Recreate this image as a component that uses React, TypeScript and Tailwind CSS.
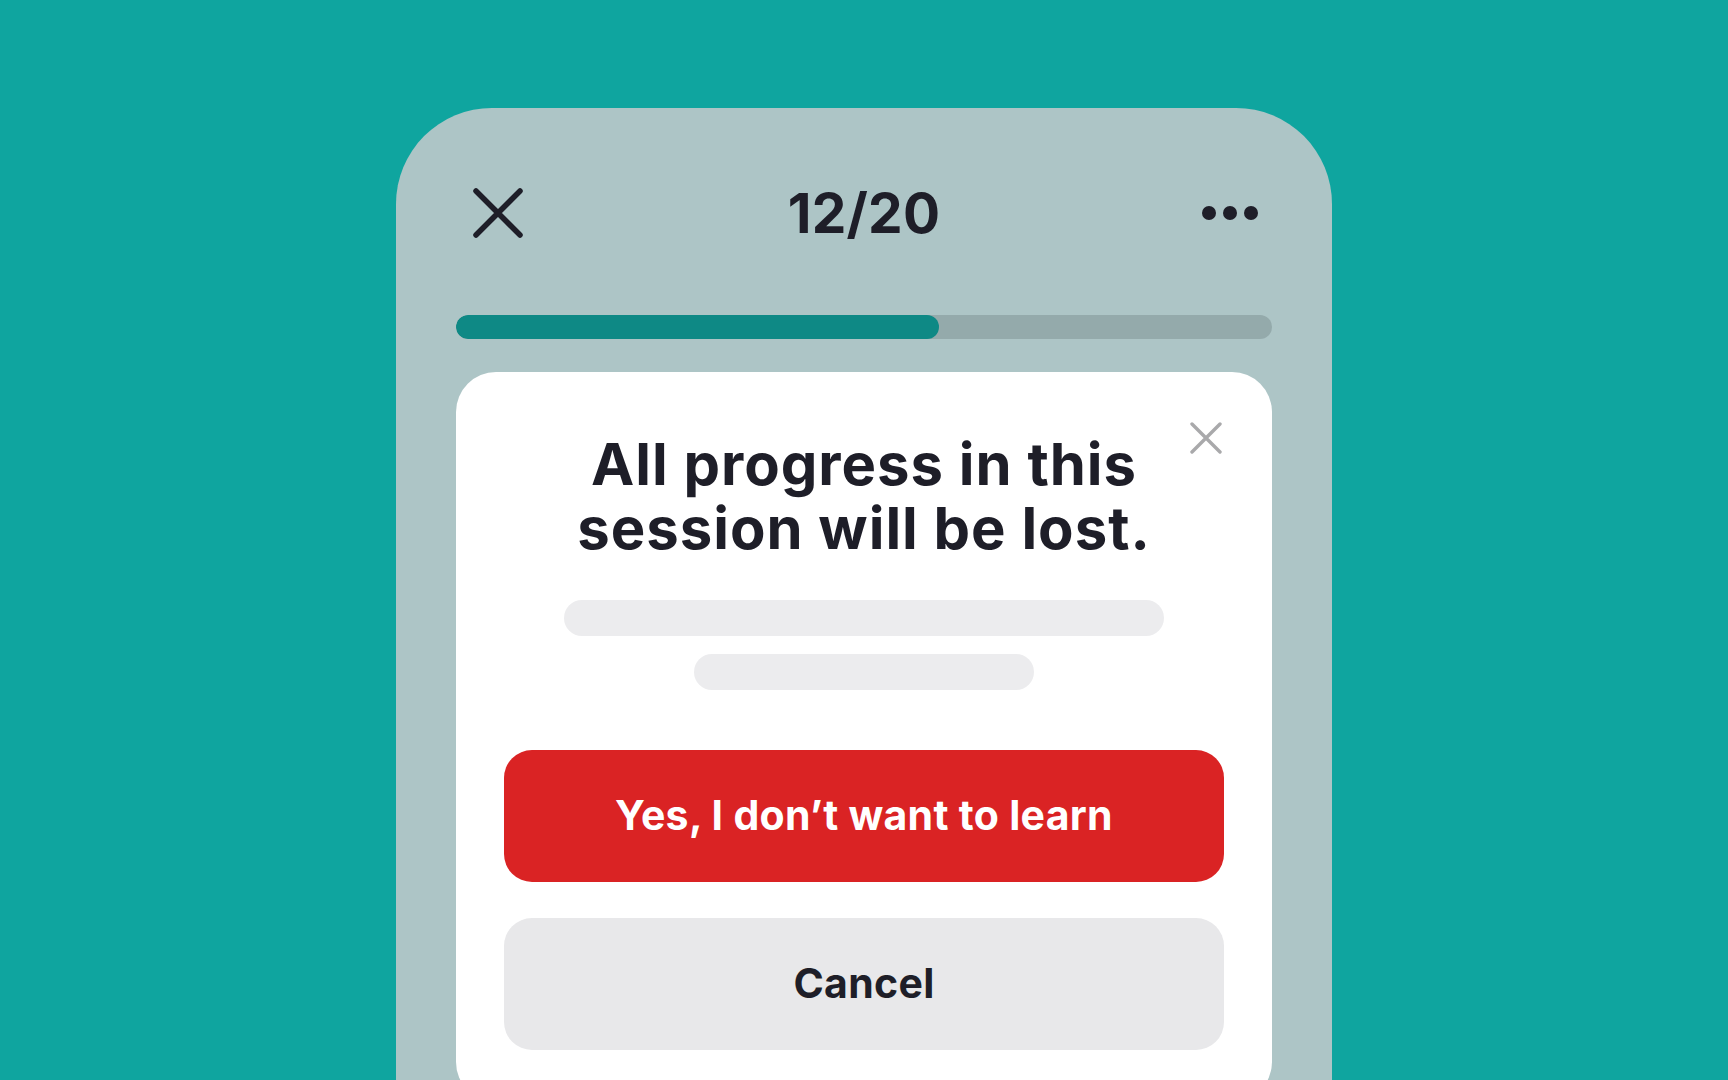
import React from "react";

const font = { fontFamily: "Inter, 'Noto Sans', sans-serif" };

function CloseIcon() {
  return (
    <svg width="50" height="50" viewBox="0 0 50 50" fill="none">
      <path d="M3 3L47 47M47 3L3 47" stroke="#1e1e28" strokeWidth="5.5" strokeLinecap="round" />
    </svg>
  );
}

function MoreIcon() {
  return (
    <svg width="56" height="14" viewBox="0 0 56 14" fill="#1e1e28">
      <circle cx="7" cy="7" r="7" />
      <circle cx="28" cy="7" r="7" />
      <circle cx="49" cy="7" r="7" />
    </svg>
  );
}

function SmallClose() {
  return (
    <svg width="32" height="32" viewBox="0 0 32 32" fill="none">
      <path d="M2 2L30 30M30 2L2 30" stroke="#a9a9ab" strokeWidth="3.4" strokeLinecap="round" />
    </svg>
  );
}

export default function App() {
  const done = 12;
  const total = 20;
  return (
    <div className="w-full h-[1080px] bg-[#0fa59f] overflow-hidden flex justify-center items-start pt-[108px]" style={font}>
      <div className="w-[936px] bg-[#adc5c6] rounded-t-[96px] px-[60px] flex flex-col">
        {/* top bar */}
        <div className="shrink-0 mt-[56px] h-[98px] grid grid-cols-[1fr_auto_1fr] items-center">
          <div className="flex justify-start pl-[17px]">
            <CloseIcon />
          </div>
          <div className="text-[55px] font-bold text-[#1e1e28] leading-none tracking-[0.2px]">
            {done}/{total}
          </div>
          <div className="flex justify-end pr-[14px]">
            <MoreIcon />
          </div>
        </div>

        {/* progress */}
        <div className="shrink-0 mt-[53px] h-[24px] rounded-full bg-[#94aaab] overflow-hidden">
          <div
            className="h-full rounded-full bg-[#0e8985]"
            style={{ width: `calc(${(done / total) * 100}% - 7px)` }}
          />
        </div>

        {/* dialog */}
        <div className="relative shrink-0 mt-[33px] h-[730px] bg-white rounded-[40px] px-[48px] pt-[60px] flex flex-col items-center">
          <button className="absolute top-[50px] right-[50px]">
            <SmallClose />
          </button>
          <h1 className="text-[58px] leading-[64px] font-bold text-[#1e1e28] text-center tracking-[1px]">
            All progress in this
            <br />
            session will be lost.
          </h1>
          <div className="mt-[40px] w-[600px] h-[36px] rounded-full bg-[#ececee]" />
          <div className="mt-[18px] w-[340px] h-[36px] rounded-full bg-[#ececee]" />
          <button className="mt-[60px] w-full h-[132px] rounded-[28px] bg-[#da2324] text-white text-[41px] font-bold tracking-[0.3px]">
            Yes, I don’t want to learn
          </button>
          <button className="mt-[36px] w-full h-[132px] rounded-[28px] bg-[#e8e8ea] text-[#1e1e28] text-[41px] font-bold tracking-[0.3px]">
            Cancel
          </button>
        </div>
      </div>
    </div>
  );
}
